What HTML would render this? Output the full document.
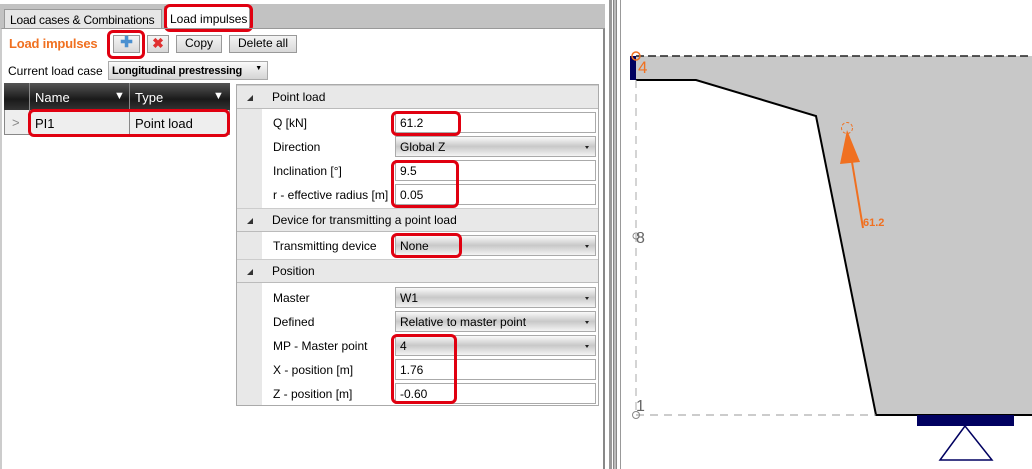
<!DOCTYPE html><html><head><style>
body{margin:0;width:1032px;height:469px;background:#fff;position:relative;overflow:hidden;font-family:"Liberation Sans",Arial,sans-serif;font-size:12px;color:#000}
.a{position:absolute;box-sizing:border-box;white-space:nowrap}
.red{position:absolute;border:3px solid #e00010;border-radius:6px;box-sizing:border-box}
.btn{position:absolute;box-sizing:border-box;border:1px solid #999;background:linear-gradient(#f4f4f4,#d8d8d8);text-align:center;line-height:15px;font-size:12px}
.lbl{position:absolute;left:273px;font-size:12px;white-space:nowrap}
.val{position:absolute;left:395px;width:201px;height:21px;border:1px solid #aaa;box-sizing:border-box;background:#fff;padding-left:4px;line-height:21px;white-space:nowrap}
.dd{background:linear-gradient(#fafafa,#c8c8c8 50%,#f4f4f4)}
.dd:after{content:"";position:absolute;right:6px;top:9px;border:2px solid transparent;border-top:3px solid #222}
.cat{position:absolute;left:237px;width:361px;height:24px;background:#e8e8e8;border-top:1px solid #ccc;border-bottom:1px solid #bbb;box-sizing:border-box;line-height:22px}
.cat span{position:absolute;left:35px}
.cat i{position:absolute;left:10px;top:9px;border-left:6px solid transparent;border-bottom:6px solid #333}
</style></head><body>
<div class="a" style="left:0;top:4px;width:605px;height:24px;background:#c2c2c2"></div>
<div class="a" style="left:4px;top:9px;width:158px;height:20px;background:#e6e6e6;border:1px solid #999;border-bottom:none;padding:3px 0 0 5px;font-size:12px;letter-spacing:-0.2px">Load cases &amp; Combinations</div>
<div class="a" style="left:164px;top:6px;width:86px;height:23px;background:#fff;border:1px solid #999;border-bottom:none;padding:5px 0 0 5px;font-size:12px">Load impulses</div>
<div class="red" style="left:164px;top:4px;width:89px;height:28px"></div>
<div class="a" style="left:0;top:28px;width:605px;height:441px;border-left:2px solid #ccc;border-right:2px solid #888;border-top:1px solid #999"></div>
<div class="a" style="left:9px;top:36px;color:#f07020;font-weight:bold;font-size:13px;letter-spacing:-0.2px">Load impulses</div>
<div class="btn" style="left:113px;top:35px;width:27px;height:18px;color:#4a90d0;font-weight:bold;font-size:15px;line-height:14px">✚</div>
<div class="red" style="left:107px;top:30px;width:38px;height:29px"></div>
<div class="btn" style="left:147px;top:35px;width:22px;height:18px;color:#e03030;font-weight:bold;font-size:14px">✖</div>
<div class="btn" style="left:176px;top:35px;width:46px;height:18px">Copy</div>
<div class="btn" style="left:229px;top:35px;width:68px;height:18px">Delete all</div>
<div class="a" style="left:8px;top:64px">Current load case</div>
<div class="a" style="left:108px;top:61px;width:160px;height:19px;border:1px solid #aaa;background:linear-gradient(#fafafa,#d4d4d4);font-weight:bold;padding:3px 0 0 3px;font-size:11px;letter-spacing:-0.2px">Longitudinal prestressing<span style="position:absolute;right:5px;top:3px;font-size:7px">▼</span></div>
<div class="a" style="left:4px;top:83px;width:226px;height:52px;border:1px solid #888;background:#eee"></div>
<div class="a" style="left:4px;top:83px;width:226px;height:27px;background:linear-gradient(#555,#1a1a1a 60%,#333)"></div>
<div class="a" style="left:29px;top:83px;width:1px;height:52px;background:#888"></div>
<div class="a" style="left:129px;top:83px;width:1px;height:52px;background:#888"></div>
<div class="a" style="left:35px;top:90px;color:#fff;font-size:13px">Name</div>
<div class="a" style="left:135px;top:90px;color:#fff;font-size:13px">Type</div>
<div class="a" style="left:114px;top:90px;color:#fff;font-size:11px">▼</div>
<div class="a" style="left:213px;top:90px;color:#fff;font-size:11px">▼</div>
<div class="a" style="left:12px;top:115px;color:#888;font-size:13px">&gt;</div>
<div class="a" style="left:35px;top:116px;font-size:13px">PI1</div>
<div class="a" style="left:135px;top:116px;font-size:13px">Point load</div>
<div class="red" style="left:28px;top:109px;width:202px;height:28px"></div>
<div class="a" style="left:236px;top:84px;width:363px;height:322px;border:1px solid #aaa;background:#fff"></div>
<div class="a" style="left:237px;top:85px;width:25px;height:320px;background:#e8e8e8"></div>
<div class="cat" style="top:85px"><i></i><span>Point load</span></div>
<div class="lbl" style="top:116px">Q [kN]</div><div class="val" style="top:112px">61.2</div>
<div class="lbl" style="top:140px">Direction</div><div class="val dd" style="top:136px">Global Z</div>
<div class="lbl" style="top:164px">Inclination [°]</div><div class="val" style="top:160px">9.5</div>
<div class="lbl" style="top:188px">r - effective radius [m]</div><div class="val" style="top:184px">0.05</div>
<div class="cat" style="top:208px"><i></i><span>Device for transmitting a point load</span></div>
<div class="lbl" style="top:239px">Transmitting device</div><div class="val dd" style="top:235px">None</div>
<div class="cat" style="top:259px"><i></i><span>Position</span></div>
<div class="lbl" style="top:291px">Master</div><div class="val dd" style="top:287px">W1</div>
<div class="lbl" style="top:315px">Defined</div><div class="val dd" style="top:311px">Relative to master point</div>
<div class="lbl" style="top:339px">MP - Master point</div><div class="val dd" style="top:335px">4</div>
<div class="lbl" style="top:363px">X - position [m]</div><div class="val" style="top:359px">1.76</div>
<div class="lbl" style="top:387px">Z - position [m]</div><div class="val" style="top:383px">-0.60</div>
<div class="red" style="left:391px;top:111px;width:70px;height:25px"></div>
<div class="red" style="left:391px;top:160px;width:68px;height:48px"></div>
<div class="red" style="left:391px;top:233px;width:71px;height:25px"></div>
<div class="red" style="left:391px;top:334px;width:66px;height:70px"></div>
<div class="a" style="left:607px;top:0;width:14px;height:469px;background:#fff"></div>
<div class="a" style="left:609px;top:0;width:3px;height:469px;background:#999"></div>
<div class="a" style="left:613px;top:0;width:4px;height:469px;background:#bbb;border-left:1px solid #888;border-right:1px solid #888"></div>
<div class="a" style="left:620px;top:0;width:1px;height:469px;background:#999"></div>
<svg class="a" style="left:0;top:0" width="1032" height="469">
<polygon points="636,56 1032,56 1032,415 876,415 816,116 696,80 636,80" fill="#c8c8c8"/>
<polyline points="636,80 696,80 816,116 876,415 1032,415" fill="none" stroke="#000" stroke-width="2"/>
<line x1="636" y1="56" x2="1032" y2="56" stroke="#222" stroke-width="1.5" stroke-dasharray="8,4"/>
<line x1="636" y1="80" x2="636" y2="415" stroke="#aaa" stroke-dasharray="8,6"/>
<line x1="636" y1="415" x2="876" y2="415" stroke="#999" stroke-dasharray="8,6"/>
<rect x="630" y="56" width="6" height="24" fill="#000060"/>
<circle cx="636" cy="56" r="4" fill="none" stroke="#f07020" stroke-width="1.5"/>
<text x="638" y="73" fill="#f07020" font-size="17" font-family="Liberation Sans">4</text>
<circle cx="636" cy="236" r="3" fill="none" stroke="#888"/>
<text x="636" y="243" fill="#666" font-size="16" font-family="Liberation Sans">8</text>
<circle cx="636" cy="415" r="3.5" fill="none" stroke="#888"/>
<text x="636" y="411" fill="#666" font-size="16" font-family="Liberation Sans">1</text>
<rect x="917" y="415" width="97" height="11" fill="#000060"/>
<polygon points="965,426 940,460 992,460" fill="#fff" stroke="#000060" stroke-width="1.5"/>
<circle cx="847" cy="128" r="5.5" fill="none" stroke="#f07020" stroke-dasharray="3,2"/>
<line x1="863" y1="228" x2="850" y2="150" stroke="#f07020" stroke-width="2"/>
<polygon points="847,130 840,164 860,162" fill="#f07020"/>
<text x="863" y="226" fill="#f07020" font-size="11" font-weight="bold" font-family="Liberation Sans">61.2</text>
</svg>
</body></html>
